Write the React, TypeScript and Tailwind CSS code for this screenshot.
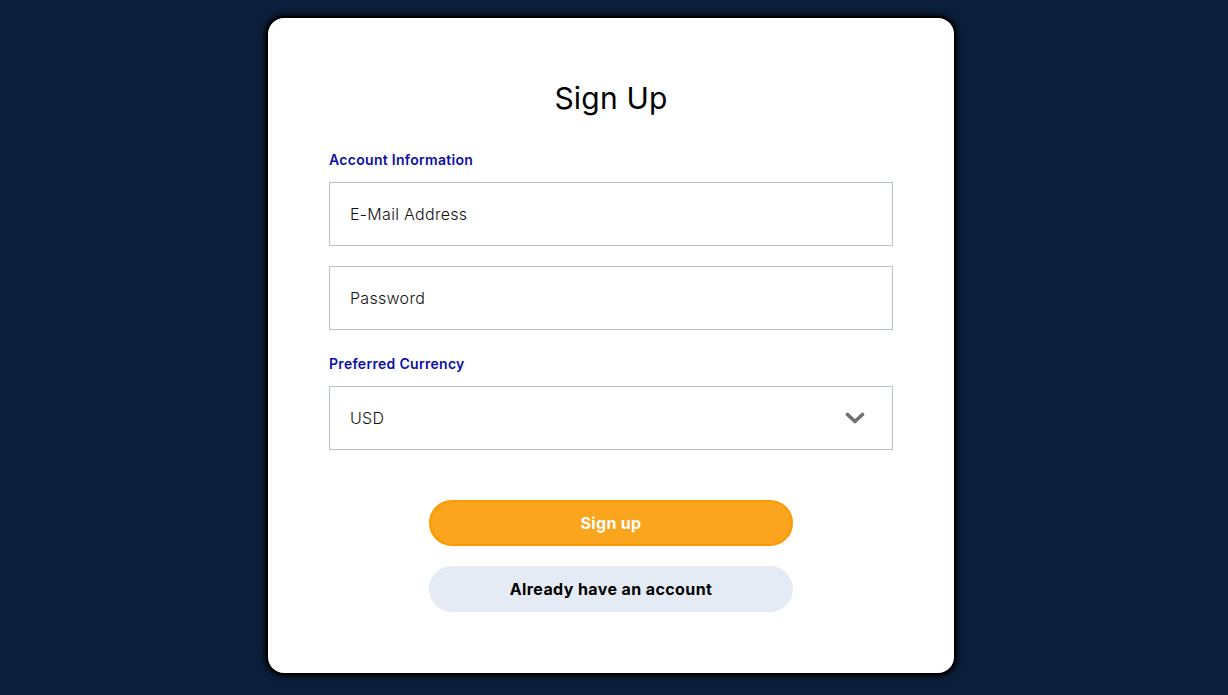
import React from "react";

export default function App() {
  return (
    <div
      className="min-h-[695px] w-full bg-[#0b1f3c] flex justify-center pt-[18px] pr-[6px]"
      style={{ fontFamily: "Inter, 'Noto Sans', sans-serif" }}
    >
      <div className="w-[686px] h-[655px] bg-white rounded-[16px] shadow-[0_0_0_2px_#000,0_0_6px_3px_#000] px-[61px] pt-[60px] flex flex-col">
        <h1 className="text-center text-[30px] leading-[40px] font-normal text-black tracking-[0.2px]">
          Sign Up
        </h1>

        <div className="mt-[33px] text-[14px] leading-[18px] font-semibold text-[#0a10a8] tracking-[0.3px]">
          Account Information
        </div>
        <div className="mt-[13px] flex flex-col gap-[20px]">
          <input
            placeholder="E-Mail Address"
            className="h-[64px] w-full border border-[#b9c1cc] px-[20px] text-[16px] font-light text-[#111] placeholder:text-[#111] outline-none tracking-[0.3px]"
          />
          <input
            placeholder="Password"
            type="password"
            className="h-[64px] w-full border border-[#b9c1cc] px-[20px] text-[16px] font-light text-[#111] placeholder:text-[#111] outline-none tracking-[0.3px]"
          />
        </div>

        <div className="mt-[25px] text-[14px] leading-[18px] font-semibold text-[#0a10a8] tracking-[0.3px]">
          Preferred Currency
        </div>
        <div className="mt-[13px] h-[64px] w-full border border-[#b9c1cc] px-[20px] flex items-center justify-between">
          <span className="text-[16px] font-light text-[#111] tracking-[0.3px]">USD</span>
          <svg width="20" height="14" viewBox="0 0 20 14" className="mr-[7px]">
            <path
              d="M2.5 3.5 L10 10.5 L17.5 3.5"
              fill="none"
              stroke="#6f6f6f"
              strokeWidth="3.6"
              strokeLinecap="round"
              strokeLinejoin="round"
            />
          </svg>
        </div>

        <div className="mt-[50px] flex flex-col items-center gap-[20px]">
          <button className="w-[364px] h-[46px] rounded-full bg-[#fba51e] border-2 border-[#f89b02] text-white text-[16px] font-bold tracking-[0.3px]">
            Sign up
          </button>
          <button className="w-[364px] h-[46px] rounded-full bg-[#e5ebf5] text-black text-[16px] font-bold tracking-[0.4px]">
            Already have an account
          </button>
        </div>
      </div>
    </div>
  );
}
